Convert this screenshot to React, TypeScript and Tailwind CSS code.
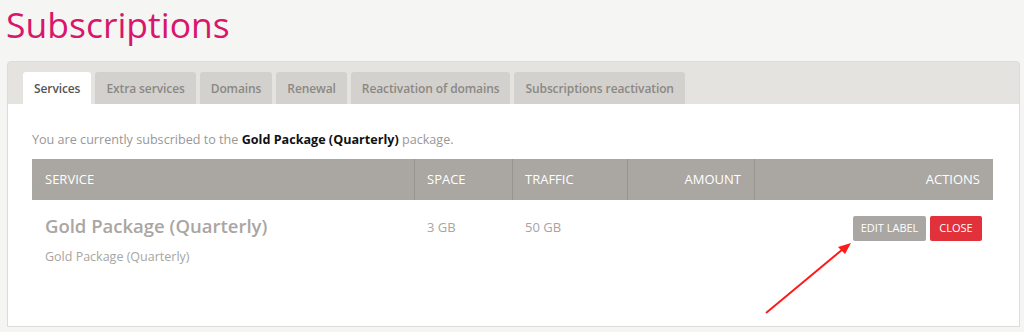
import React from "react";

const tabs = [
  "Services",
  "Extra services",
  "Domains",
  "Renewal",
  "Reactivation of domains",
  "Subscriptions reactivation",
];

export default function App() {
  return (
    <div
      className="relative min-h-[332px] w-[1024px] bg-[#f5f5f4] overflow-hidden"
      style={{ fontFamily: '"Open Sans", "Liberation Sans", sans-serif' }}
    >
      {/* Title */}
      <h1 className="pl-[6px] pt-[3px] text-[35.5px] leading-[43px] text-[#d8166c]">
        Subscriptions
      </h1>

      {/* Panel */}
      <div className="ml-[7px] mr-[4px] mt-[15px] rounded-t-[4px] border border-[#dddcda] bg-[#e4e3e0]">
        {/* Tabs */}
        <div className="flex gap-[4px] pl-[15px] pt-[10px]">
          {tabs.map((t, i) => (
            <div
              key={t}
              className={
                i === 0
                  ? "h-[32px] rounded-t-[3px] bg-white px-[11px] pt-[8px] text-[12px] font-semibold tracking-[-0.1px] text-[#555555]"
                  : "h-[32px] rounded-t-[3px] bg-[#d3d1cd] px-[11px] pt-[8px] text-[12px] font-semibold tracking-[-0.1px] text-[#8b8884]"
              }
            >
              {t}
            </div>
          ))}
        </div>

        {/* Content */}
        <div className="h-[222px] bg-white px-[24px] pt-[26px]">
          <p className="text-[12.6px] leading-[20px] text-[#9a9795]">
            You are currently subscribed to the{" "}
            <span className="font-bold text-[#111111]">Gold Package (Quarterly)</span> package.
          </p>

          {/* Table */}
          <div className="mt-[9px] w-[961px]">
            <div className="grid h-[41px] grid-cols-[383px_98px_115px_127px_238px] bg-[#aaa6a2] text-[13px] uppercase text-white">
              <div className="flex items-center border-r border-[#979390] pl-[13px]">Service</div>
              <div className="flex items-center border-r border-[#979390] pl-[12px]">Space</div>
              <div className="flex items-center border-r border-[#979390] pl-[12px]">Traffic</div>
              <div className="flex items-center justify-end border-r border-[#979390] pr-[13px]">Amount</div>
              <div className="flex items-center justify-end pr-[13px]">Actions</div>
            </div>

            <div className="grid grid-cols-[383px_98px_115px_127px_238px] pt-[13px] text-[13px] text-[#a8a5a2]">
              <div className="pl-[13px]">
                <div className="text-[18.5px] font-semibold leading-[26px] text-[#a9a6a3]">
                  Gold Package (Quarterly)
                </div>
                <div className="mt-[9px] text-[12.5px] leading-[18px] text-[#a8a5a2]">
                  Gold Package (Quarterly)
                </div>
              </div>
              <div className="pl-[12px] pt-[5px]">3 GB</div>
              <div className="pl-[12px] pt-[5px]">50 GB</div>
              <div></div>
              <div className="flex justify-end gap-[4px] pr-[11px] pt-[3px]">
                <button className="h-[25px] w-[73px] rounded-[2px] bg-[#a9a6a3] text-[11px] uppercase text-white">
                  Edit label
                </button>
                <button className="h-[25px] w-[52px] rounded-[2px] bg-[#e1313b] text-[11px] uppercase text-white">
                  Close
                </button>
              </div>
            </div>
          </div>
        </div>
      </div>

      {/* Red annotation arrow */}
      <svg
        className="pointer-events-none absolute left-0 top-0"
        width="1024"
        height="332"
        viewBox="0 0 1024 332"
      >
        <line x1="766" y1="313" x2="843" y2="249" stroke="#ff1a1a" strokeWidth="2" />
        <polygon points="851,243 838,247 845,254" fill="#ff1a1a" />
      </svg>
    </div>
  );
}
